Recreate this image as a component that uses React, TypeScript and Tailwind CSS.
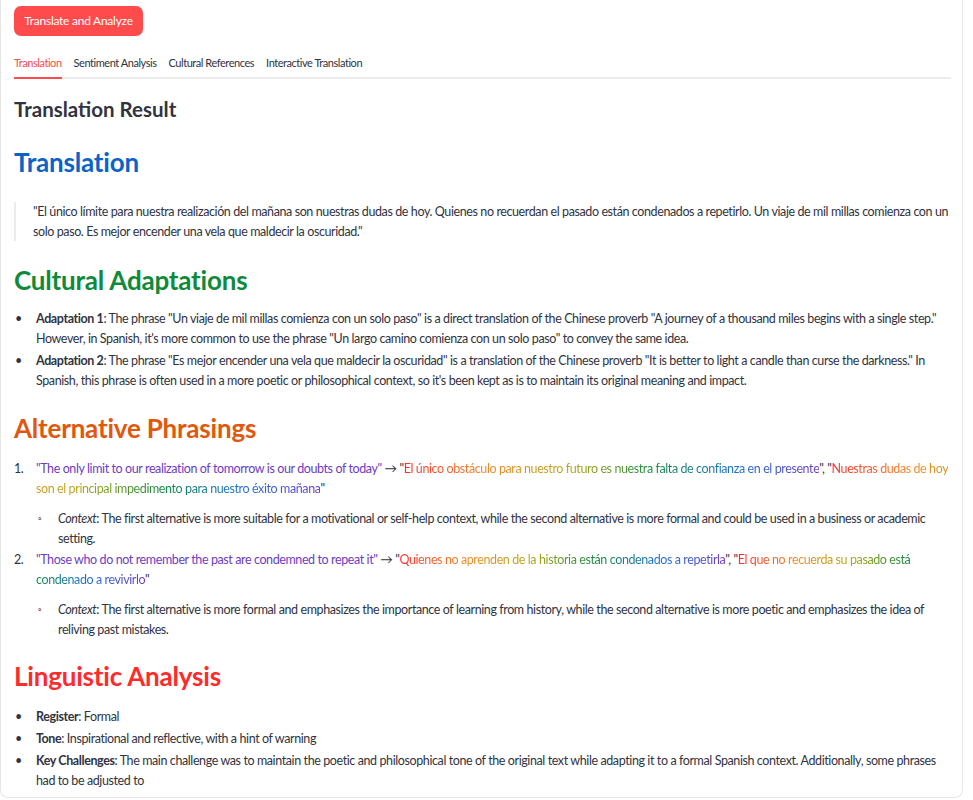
import React from "react";

const rainbow =
  "bg-[linear-gradient(to_right,#ff2b2b,#f08a24,#b3a512,#158a3e,#1c70d6,#6d3cc4)] bg-clip-text text-transparent";

function Rb({ children }: { children: React.ReactNode }) {
  return <span className={rainbow}>{children}</span>;
}

const body = "text-[12.5px] leading-[19.5px] tracking-[-0.4px]";

export default function App() {
  return (
    <div className="bg-white w-[973px] h-[800px] font-['Lato','Noto_Sans',sans-serif] text-[#31333f]">
      <div className="w-[963px] h-[798px] border-l border-r border-b border-[#e6e6e6] rounded-b-[8px] pl-[13px] pr-[12px] pt-[6px] overflow-hidden">
        <button className="h-[30px] w-[129px] rounded-[7px] bg-[#ff4b4b] text-white text-[12px] tracking-[-0.25px] leading-none">
          Translate and Analyze
        </button>

        <div className="mt-[12px] flex gap-[12px] border-b-2 border-[#ececec] text-[11px] leading-[13px] tracking-[-0.45px] w-[937px]">
          <div className="text-[#ff4b4b] pt-[8px] pb-[8px] border-b-2 border-[#ff4b4b] -mb-[2px]">Translation</div>
          <div className="pt-[8px] pb-[8px]">Sentiment Analysis</div>
          <div className="pt-[8px] pb-[8px]">Cultural References</div>
          <div className="pt-[8px] pb-[8px]">Interactive Translation</div>
        </div>

        <div className="w-[937px]">
          <h2 className="mt-[16px] text-[20.5px] font-bold leading-[28px] text-[#31333f]">Translation Result</h2>

          <h1 className="mt-[21px] text-[26px] tracking-[-0.2px] font-bold leading-[36px] text-[#0b63c9]">Translation</h1>

          <blockquote className={`mt-[22px] border-l-2 border-[#ececec] pl-[17px] ${body}`}>
            "El único límite para nuestra realización del mañana son nuestras dudas de hoy. Quienes no recuerdan el pasado están condenados a repetirlo. Un viaje de mil millas comienza con un solo paso. Es mejor encender una vela que maldecir la oscuridad."
          </blockquote>

          <h1 className="mt-[21px] text-[26px] tracking-[-0.2px] font-bold leading-[36px] text-[#0e8a3a]">Cultural Adaptations</h1>

          <ul className={`mt-[11px] ${body}`}>
            <li className="flex">
              <span className="w-[22px] shrink-0 pl-[1px]">•</span>
              <span>
                <b>Adaptation 1</b>: The phrase "Un viaje de mil millas comienza con un solo paso" is a direct translation of the Chinese proverb "A journey of a thousand miles begins with a single step." However, in Spanish, it's more common to use the phrase "Un largo camino comienza con un solo paso" to convey the same idea.
              </span>
            </li>
            <li className="flex mt-[3px]">
              <span className="w-[22px] shrink-0 pl-[1px]">•</span>
              <span>
                <b>Adaptation 2</b>: The phrase "Es mejor encender una vela que maldecir la oscuridad" is a translation of the Chinese proverb "It is better to light a candle than curse the darkness." In Spanish, this phrase is often used in a more poetic or philosophical context, so it's been kept as is to maintain its original meaning and impact.
              </span>
            </li>
          </ul>

          <h1 className="mt-[20px] text-[26px] tracking-[-0.2px] font-bold leading-[36px] text-[#e2570c]">Alternative Phrasings</h1>

          <ol className={`mt-[13px] ${body}`}>
            <li className="flex">
              <span className="w-[22px] shrink-0">1.</span>
              <div>
                <div>
                  <span className="text-[#6d3cc4]">"The only limit to our realization of tomorrow is our doubts of today"</span> → "
                  <Rb>El único obstáculo para nuestro futuro es nuestra falta de confianza en el presente</Rb>", "
                  <Rb>Nuestras dudas de hoy son el principal impedimento para nuestro éxito mañana</Rb>"
                </div>
                <div className="flex mt-[11px]">
                  <span className="w-[22px] shrink-0 pl-[2px] text-[10px]">◦</span>
                  <span>
                    <i>Context</i>: The first alternative is more suitable for a motivational or self-help context, while the second alternative is more formal and could be used in a business or academic setting.
                  </span>
                </div>
              </div>
            </li>
            <li className="flex mt-[2px]">
              <span className="w-[22px] shrink-0">2.</span>
              <div>
                <div>
                  <span className="text-[#6d3cc4]">"Those who do not remember the past are condemned to repeat it"</span> → "
                  <Rb>Quienes no aprenden de la historia están condenados a repetirla</Rb>", "
                  <Rb>El que no recuerda su pasado está condenado a revivirlo</Rb>"
                </div>
                <div className="flex mt-[11px]">
                  <span className="w-[22px] shrink-0 pl-[2px] text-[10px]">◦</span>
                  <span>
                    <i>Context</i>: The first alternative is more formal and emphasizes the importance of learning from history, while the second alternative is more poetic and emphasizes the idea of reliving past mistakes.
                  </span>
                </div>
              </div>
            </li>
          </ol>

          <h1 className="mt-[19px] text-[26px] tracking-[-0.2px] font-bold leading-[36px] text-[#ff2b2b]">Linguistic Analysis</h1>

          <ul className={`mt-[13px] ${body}`}>
            <li className="flex">
              <span className="w-[22px] shrink-0 pl-[1px]">•</span>
              <span><b>Register</b>: Formal</span>
            </li>
            <li className="flex mt-[2.5px]">
              <span className="w-[22px] shrink-0 pl-[1px]">•</span>
              <span><b>Tone</b>: Inspirational and reflective, with a hint of warning</span>
            </li>
            <li className="flex mt-[2.5px]">
              <span className="w-[22px] shrink-0 pl-[1px]">•</span>
              <span>
                <b>Key Challenges</b>: The main challenge was to maintain the poetic and philosophical tone of the original text while adapting it to a formal Spanish context. Additionally, some phrases had to be adjusted to
              </span>
            </li>
          </ul>
        </div>
      </div>
    </div>
  );
}
